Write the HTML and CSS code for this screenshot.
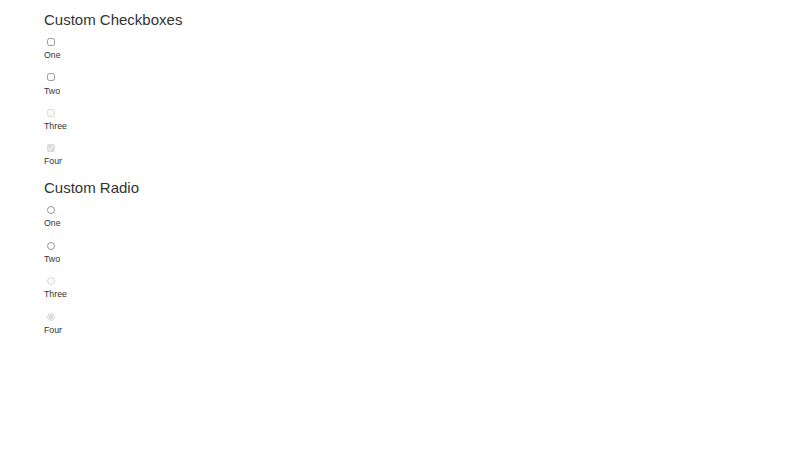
FILE: index.html
```html
<!DOCTYPE html>
<html>
<head>
<meta charset="utf-8">
<link rel="stylesheet" href="styles.css">
</head>
<body>
<div class="page">
  <section class="group">
    <h3 class="title">Custom Checkboxes</h3>
    <div class="list list-check">
      <div class="option"><input type="checkbox" id="c1"><label for="c1">One</label></div>
      <div class="option"><input type="checkbox" id="c2"><label for="c2">Two</label></div>
      <div class="option"><input type="checkbox" id="c3" disabled><label for="c3">Three</label></div>
      <div class="option"><input type="checkbox" id="c4" checked disabled><label for="c4">Four</label></div>
    </div>
  </section>
  <section class="group">
    <h3 class="title">Custom Radio</h3>
    <div class="list list-radio">
      <div class="option"><input type="radio" name="r" id="r1"><label for="r1">One</label></div>
      <div class="option"><input type="radio" name="r" id="r2"><label for="r2">Two</label></div>
      <div class="option"><input type="radio" name="r3" id="r3" disabled><label for="r3">Three</label></div>
      <div class="option"><input type="radio" name="r4" id="r4" checked disabled><label for="r4">Four</label></div>
    </div>
  </section>
</div>
</body>
</html>
```
FILE: styles.css
```css
html, body {
  margin: 0;
  padding: 0;
  background: #fff;
}
body {
  font-family: "Liberation Sans", Arial, sans-serif;
  font-size: 8.75px;
  line-height: 12.5px;
  color: #333;
}
.page {
  display: flex;
  flex-direction: column;
  gap: 12px;
  padding: 11.5px 0 0 44px;
}
.title {
  font-size: 15px;
  font-weight: 500;
  line-height: 16.5px;
  margin: 0;
}
.list {
  display: flex;
  flex-direction: column;
}
.list-check {
  gap: 11.4px;
  margin-top: 10px;
}
.list-radio {
  gap: 12.3px;
  margin-top: 9.7px;
}
.option input {
  display: block;
  width: 8px;
  height: 8px;
  margin: 0 0 3.4px 3px;
  opacity: 0.75;
}
.list-radio .option input {
  margin-bottom: 2.9px;
}
.option label {
  display: block;
}
```
